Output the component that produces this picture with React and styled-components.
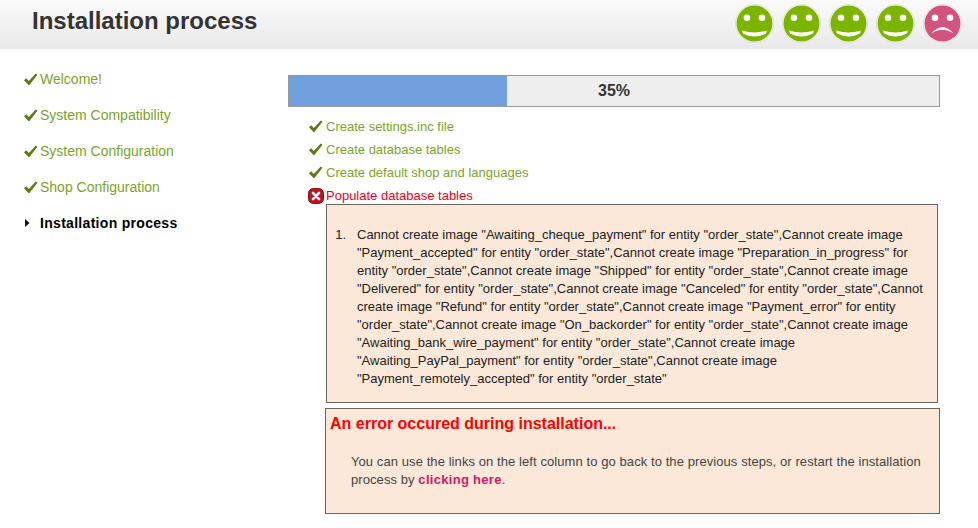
import React from 'react';
import styled, { createGlobalStyle } from 'styled-components';

const GlobalStyle = createGlobalStyle`
  html, body { margin: 0; padding: 0; background: #fff; }
  body { font-family: "Liberation Sans", Arial, sans-serif; width: 978px; height: 528px; overflow: hidden; }
`;

const Header = styled.header`
  height: 49px;
  display: flex;
  align-items: flex-start;
  justify-content: space-between;
  background: linear-gradient(#fafafa, #e9e9e9);
`;

const Title = styled.h1`
  margin: 6px 0 0 32px;
  font-size: 24px;
  line-height: 30px;
  font-weight: bold;
  color: #333;
`;

const Smileys = styled.div`
  display: flex;
  gap: 8px;
  padding: 4px 16px 0 0;
`;

const Body = styled.div`
  display: flex;
`;

const Sidebar = styled.ul`
  list-style: none;
  margin: 0;
  padding: 12px 0 0 23px;
  width: 288px;
  box-sizing: border-box;
  flex-shrink: 0;
`;

const SideItem = styled.li`
  height: 36px;
  display: flex;
  align-items: center;
  gap: 2px;
  font-size: 14px;
  color: ${p => (p.$current ? '#000' : '#7ba428')};
  font-weight: ${p => (p.$current ? 'bold' : 'normal')};
  letter-spacing: ${p => (p.$current ? '0.3px' : '0')};
`;

const Main = styled.main`
  flex: 1;
  padding-top: 26px;
  padding-right: 38px;
`;

const Progress = styled.div`
  height: 30px;
  border: 1px solid #999;
  background: #eee;
  position: relative;
  display: flex;
  align-items: center;
  justify-content: center;
  font-size: 16px;
  font-weight: bold;
  color: #333;
`;

const ProgressFill = styled.div`
  position: absolute;
  left: 0;
  top: 0;
  bottom: 0;
  background: #72a0dc;
`;

const ProgressLabel = styled.span`
  position: relative;
`;

const Steps = styled.ul`
  list-style: none;
  margin: 8px 0 0;
  padding: 0 0 0 20px;
`;

const Step = styled.li`
  height: 23px;
  display: flex;
  align-items: center;
  gap: ${p => (p.$error ? '2px' : '3px')};
  font-size: 13px;
  color: ${p => (p.$error ? '#f00020' : '#7ba428')};
`;

const IconSlot = styled.span`
  width: 15px;
  display: inline-flex;
  padding-left: 2px;
  box-sizing: border-box;
  flex-shrink: 0;
`;

const LogBox = styled.div`
  margin: -3px 2px 0 38px;
  height: 199px;
  box-sizing: border-box;
  border: 1px solid #6b6560;
  background: #fbe8d8;
  padding: 21px 14px 0 9px;
  font-size: 13px;
  line-height: 18px;
  color: #222;
`;

const LogList = styled.ol`
  margin: 0;
  padding: 0 0 0 21px;

  li::marker {
    content: counter(list-item) ".\\00a0\\00a0\\00a0";
  }
`;

const ErrorBox = styled.div`
  margin: 5px 0 0 37px;
  height: 106px;
  box-sizing: border-box;
  border: 1px solid #6b6560;
  background: #fbe8d8;
  padding: 4px 4px 0;
`;

const ErrorTitle = styled.h2`
  margin: 0;
  font-size: 16px;
  line-height: 22px;
  font-weight: bold;
  color: #f00;
`;

const ErrorText = styled.p`
  margin: 18px 13px 0 21px;
  font-size: 13px;
  line-height: 18px;
  letter-spacing: 0.08px;
  color: #444;
`;

const RestartLink = styled.a`
  color: #d4166c;
  font-weight: bold;
  letter-spacing: 0.3px;
  text-decoration: none;
`;

const Check = ({ size = 15 }) => (
  <svg width={size} height={size} viewBox="0 0 16 16">
    <path d="M1 8.8 L3.4 6.6 L6.2 9.6 L13.6 1.6 L15.4 3 L6.4 14.4 Z" fill="#5b7a12" />
  </svg>
);

const ErrorIcon = () => (
  <svg width="16" height="16" viewBox="0 0 16 16">
    <rect x="0.5" y="0.5" width="15" height="15" rx="5" fill="#c40f1c" stroke="#8e0a12" />
    <path d="M5 5 L11 11 M11 5 L5 11" stroke="#fff" strokeWidth="2.6" strokeLinecap="round" />
  </svg>
);

const Arrow = () => (
  <svg width="5" height="8" viewBox="0 0 5 8">
    <path d="M0 0 L4.5 4 L0 8 Z" fill="#111" />
  </svg>
);

const Smiley = ({ sad }) => (
  <svg width="39" height="39" viewBox="0 0 39 39">
    <circle cx="19.5" cy="19.5" r="19" fill="#fff" stroke="#d8d8d8" strokeWidth="0.8" />
    <circle cx="19.5" cy="19.5" r="18" fill={sad ? '#d2537f' : '#7cb500'} />
    <circle cx="12" cy="13.8" r="3.3" fill="#fff" />
    <circle cx="27" cy="13.8" r="3.3" fill="#fff" />
    {sad ? (
      <path d="M8.5 29.5 Q19.5 16.5 30.5 29.5 Q19.5 22 8.5 29.5 Z" fill="#fff" />
    ) : (
      <path d="M7 26.5 Q19.5 30.5 32 26.5 L31 29.5 Q19.5 35.5 8 29.5 Z" fill="#fff" />
    )}
  </svg>
);

const sideSteps = ['Welcome!', 'System Compatibility', 'System Configuration', 'Shop Configuration'];
const doneSteps = ['Create settings.inc file', 'Create database tables', 'Create default shop and languages'];

const logMessage =
  'Cannot create image "Awaiting_cheque_payment" for entity "order_state",Cannot create image "Payment_accepted" for entity "order_state",Cannot create image "Preparation_in_progress" for entity "order_state",Cannot create image "Shipped" for entity "order_state",Cannot create image "Delivered" for entity "order_state",Cannot create image "Canceled" for entity "order_state",Cannot create image "Refund" for entity "order_state",Cannot create image "Payment_error" for entity "order_state",Cannot create image "On_backorder" for entity "order_state",Cannot create image "Awaiting_bank_wire_payment" for entity "order_state",Cannot create image "Awaiting_PayPal_payment" for entity "order_state",Cannot create image "Payment_remotely_accepted" for entity "order_state"';

const App = () => (
  <>
    <GlobalStyle />
    <Header>
      <Title>Installation process</Title>
      <Smileys>
        <Smiley />
        <Smiley />
        <Smiley />
        <Smiley />
        <Smiley sad />
      </Smileys>
    </Header>
    <Body>
      <Sidebar>
        {sideSteps.map(s => (
          <SideItem key={s}>
            <Check />
            {s}
          </SideItem>
        ))}
        <SideItem $current>
          <IconSlot>
            <Arrow />
          </IconSlot>
          Installation process
        </SideItem>
      </Sidebar>
      <Main>
        <Progress>
          <ProgressFill style={{ width: '33.5%' }} />
          <ProgressLabel>35%</ProgressLabel>
        </Progress>
        <Steps>
          {doneSteps.map(s => (
            <Step key={s}>
              <Check />
              {s}
            </Step>
          ))}
          <Step $error>
            <ErrorIcon />
            Populate database tables
          </Step>
        </Steps>
        <LogBox>
          <LogList>
            <li>{logMessage}</li>
          </LogList>
        </LogBox>
        <ErrorBox>
          <ErrorTitle>An error occured during installation...</ErrorTitle>
          <ErrorText>
            You can use the links on the left column to go back to the previous steps, or restart the installation
            process by <RestartLink href="#">clicking here</RestartLink>.
          </ErrorText>
        </ErrorBox>
      </Main>
    </Body>
  </>
);

export default App;
